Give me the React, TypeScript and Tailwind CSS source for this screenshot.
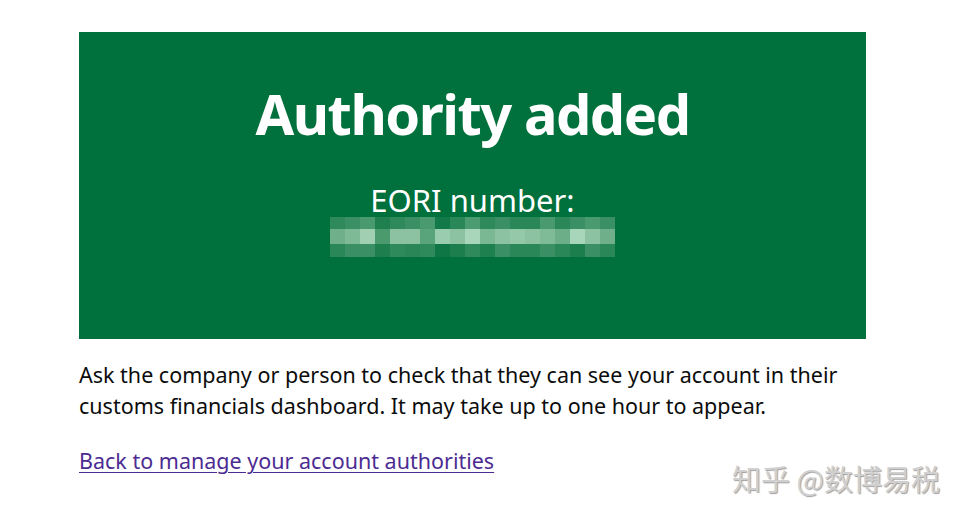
import React from 'react'

// pixelated EORI value: 19 columns x 3 rows (top, middle, bottom)
const blocks: [string, string, string][] = [
  ['#2e8a5a', '#6fb08a', '#2a8858'],
  ['#3a9064', '#7fba96', '#3a9064'],
  ['#4a9a70', '#a0cfb2', '#3a9064'],
  ['#1f7f4f', '#4a9a6e', '#1e7e4e'],
  ['#2e8a5a', '#8cc2a2', '#2e8a5a'],
  ['#3a9064', '#8cc2a2', '#2a8656'],
  ['#4a9a70', '#5aa47c', '#2e8a5a'],
  ['#127a48', '#9acdb0', '#0e7644'],
  ['#2a8858', '#8cc2a2', '#1b7e4c'],
  ['#4c9c72', '#a8d6bb', '#2e8a5a'],
  ['#2e8a5a', '#7ab894', '#1e804e'],
  ['#3a9064', '#8cc2a2', '#3a9064'],
  ['#2a8858', '#94c8a8', '#2a8858'],
  ['#2a8858', '#8cc2a2', '#2a8858'],
  ['#4a9a70', '#80bb97', '#3a9064'],
  ['#2a8858', '#6cae88', '#2a8858'],
  ['#3a9064', '#a8d6bb', '#1b7e4c'],
  ['#4a9a70', '#8cc2a2', '#3a9064'],
  ['#3a9064', '#6fb08a', '#2a8858'],
]

export default function App() {
  return (
    <div
      className="relative w-[965px] h-[516px] overflow-hidden bg-white"
      style={{ fontFamily: '"Noto Sans", Arial, sans-serif' }}
    >
      <div className="pl-[79px] pt-[32px] w-[866px]">
        {/* Confirmation panel */}
        <div className="bg-[#00703c] h-[307px] flex flex-col items-center text-white pt-[46px]">
          <h1 className="text-[56px] leading-[70px] font-bold tracking-[-1.5px]">Authority added</h1>
          <div className="mt-[34px] text-[31px] leading-[36px]">EORI number:</div>
          <div className="flex -mt-[1px]">
            {blocks.map((b, i) => (
              <div key={i} className="flex flex-col w-[15px]">
                <div className="h-[12px]" style={{ backgroundColor: b[0] }} />
                <div className="h-[15px]" style={{ backgroundColor: b[1] }} />
                <div className="h-[13px]" style={{ backgroundColor: b[2] }} />
              </div>
            ))}
          </div>
        </div>

        <p className="mt-[20px] text-[21.5px] leading-[31px] text-[#0b0c0c]">
          Ask the company or person to check that they can see your account in their customs financials dashboard. It may take up to one hour to appear.
        </p>

        <a
          href="#"
          className="inline-block mt-[24px] text-[21.5px] leading-[31px] text-[#4c2c92] underline underline-offset-[3px] decoration-1"
        >
          Back to manage your account authorities
        </a>
      </div>

      {/* watermark */}
      <div
        className="absolute left-[732px] top-[458px] text-[29px] leading-[40px] text-[#d0d0d0]"
        style={{ fontFamily: '"Noto Sans CJK SC", sans-serif', textShadow: '1px 1px 1px #a0a0a0' }}
      >
        知乎 @数博易税
      </div>
    </div>
  )
}
